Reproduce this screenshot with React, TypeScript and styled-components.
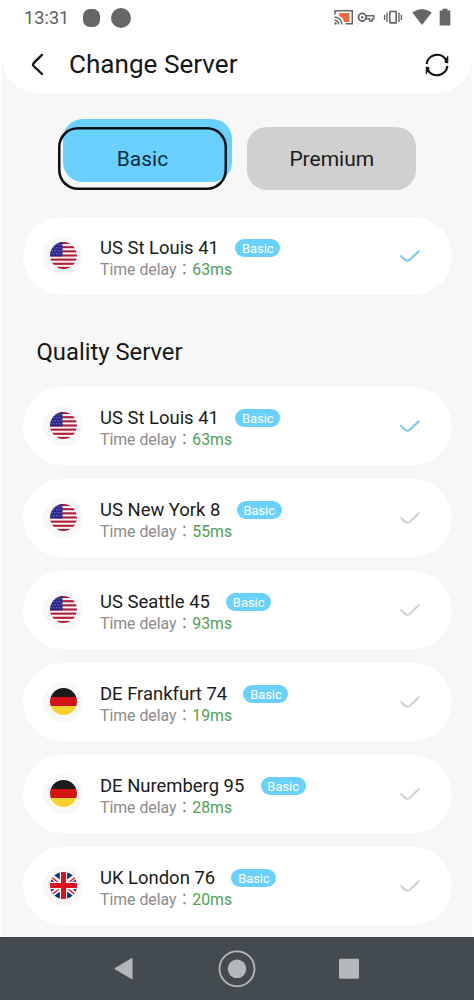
import React from "react";
import styled, { createGlobalStyle } from "styled-components";

const GlobalStyle = createGlobalStyle`
  * { box-sizing: border-box; }
  body { margin: 0; background: #fff; font-family: Roboto, "Noto Sans CJK TC", sans-serif; }
`;

const Screen = styled.div`
  width: 474px;
  height: 1000px;
  display: flex;
  flex-direction: column;
  overflow: hidden;
  background: #fff;
`;

const Body = styled.div`
  flex: 1;
  min-height: 0;
  margin: 0 2px;
  background: #f7f7f7;
  overflow: hidden;
`;

const Header = styled.header`
  height: 93px;
  background: #fff;
  border-radius: 0 0 36px 36px;
`;

const StatusBar = styled.div`
  height: 36px;
  padding: 0 22px;
  display: flex;
  align-items: center;
  justify-content: space-between;
`;

const StatusLeft = styled.div`
  display: flex;
  align-items: center;
  color: #606060;
`;

const Clock = styled.span`
  width: 58.5px;
  font-size: 18px;
  line-height: 36px;
  letter-spacing: 0.1px;
`;

const Dot = styled.span<{ $size: number; $radius: number }>`
  width: ${(p) => p.$size}px;
  height: ${(p) => p.$size}px;
  margin: 0 10.5px 0 0;
  border-radius: ${(p) => p.$radius}px;
  background: #666;
`;

const StatusIcons = styled.svg`
  width: 120px;
  height: 36px;
  margin-right: -3px;
`;

const TitleBar = styled.div`
  height: 57px;
  padding: 0 22px 0 28px;
  display: flex;
  align-items: center;
`;

const Title = styled.h1`
  flex: 1;
  margin: 0 0 0 21px;
  font-size: 26.1px;
  line-height: 57px;
  font-weight: 400;
  color: #171717;
`;

const Tabs = styled.div`
  display: flex;
  gap: 20.3px;
  margin-top: 34px;
  padding-left: 56px;
`;

const Tab = styled.button<{ $active?: boolean }>`
  position: relative;
  width: 169px;
  height: 63px;
  padding: 2px 0 0;
  border: 0;
  border-radius: 20px;
  background: ${(p) => (p.$active ? "transparent" : "#d0d0d0")};
  color: ${(p) => (p.$active ? "#0d2b3a" : "#1b1b1b")};
  font: 400 21px/1 Roboto, sans-serif;
  isolation: isolate;
`;

const TabFill = styled.span`
  position: absolute;
  z-index: -1;
  left: 5px;
  top: -8px;
  width: 169px;
  height: 63px;
  border-radius: 20px;
  background: #69d1ff;
`;

const TabOutline = styled.span`
  position: absolute;
  inset: 0;
  box-shadow: inset 0 0 0 2.5px #0b1014;
  border-radius: 20px;
`;

const Card = styled.div`
  display: flex;
  align-items: center;
  width: 429px;
  height: 78.5px;
  padding: 0 31px 0 20.5px;
  border-radius: 40px;
  background: #fff;
`;

const Current = styled.section`
  padding: 26.5px 0 0 20.5px;
`;

const SectionTitle = styled.h2`
  margin: 0;
  padding: 40px 0 16.5px 34.5px;
  font-size: 23.8px;
  line-height: 35px;
  font-weight: 400;
  color: #171717;
`;

const List = styled.section`
  display: flex;
  flex-direction: column;
  gap: 13.55px;
  padding-left: 20.5px;
`;

const FlagRing = styled.span`
  width: 40px;
  height: 40px;
  display: grid;
  place-items: center;
  border-radius: 50%;
  background: #f8f8f8;
`;

const Info = styled.div`
  flex: 1;
  padding: 6px 0 0 17px;
`;

const NameRow = styled.div`
  display: flex;
  align-items: center;
  height: 22px;
`;

const Name = styled.span`
  font-size: 18.45px;
  line-height: 22px;
  color: #1b1b1b;
  white-space: nowrap;
`;

const Badge = styled.span`
  width: 45px;
  height: 18.5px;
  margin: 0 0 0 16.3px;
  border-radius: 10px;
  background: #69d1ff;
  color: #fff;
  font-size: 12.9px;
  line-height: 19.5px;
  text-align: center;
`;

const Delay = styled.div`
  height: 22px;
  font-size: 15.8px;
  line-height: 22px;
  color: #8c8c8c;
  white-space: nowrap;
`;

const Millis = styled.span`
  color: #50a154;
`;

const NavBar = styled.nav`
  height: 63px;
  background: #434b51;
  display: flex;
  align-items: center;
  justify-content: center;
  gap: 74px;
`;

const Flag = ({ code, id }: { code: string; id: string }) => (
  <svg width="27" height="27" viewBox="0 0 27 27">
    <defs>
      <clipPath id={id}>
        <circle cx="13.5" cy="13.5" r="13.5" />
      </clipPath>
    </defs>
    <g clipPath={`url(#${id})`}>
      {code === "US" && (
        <>
          <rect width="27" height="27" fill="#f8f4f5" />
          {[0, 1, 2, 3, 4, 5, 6].map((i) => (
            <rect key={i} y={i * 4.15} width="27" height="2.08" fill="#b01c34" />
          ))}
          <rect width="12.5" height="14.4" fill="#28288c" />
          {[2, 5, 8, 11].map((y, r) =>
            [2, 5, 8, 11].map((x) => (
              <circle key={`${x}-${y}`} cx={x - (r % 2) * 1.2} cy={y + 0.8} r="0.55" fill="#b9bde8" />
            ))
          )}
        </>
      )}
      {code === "DE" && (
        <>
          <rect width="27" height="9" fill="#1b1b1b" />
          <rect y="9" width="27" height="9" fill="#d31414" />
          <rect y="18" width="27" height="9" fill="#f8d22c" />
        </>
      )}
      {code === "UK" && (
        <>
          <rect width="27" height="27" fill="#17286e" />
          <path d="M-4 0 31 27M31 0-4 27" stroke="#fff" strokeWidth="5" />
          <path d="M-4 1 13 14M31 1 14 14M-4 27 13 14M31 27 14 14" stroke="#d5152c" strokeWidth="1.4" />
          <path d="M13.5 0V27M0 13.5H27" stroke="#fff" strokeWidth="7.4" />
          <path d="M13.5 0V27M0 13.5H27" stroke="#e00f1c" strokeWidth="5" />
        </>
      )}
    </g>
  </svg>
);

const Check = ({ on }: { on?: boolean }) => (
  <svg width="22" height="16" viewBox="0 0 22 16" fill="none">
    <path
      d="M2 8.1 6.2 11.9Q8.5 13.7 10.8 11.7L19.8 3.2"
      stroke={on ? "#76c9ea" : "#d0d0d0"}
      strokeWidth="2"
      strokeLinecap="round"
    />
  </svg>
);

type Server = { code: string; name: string; delay: string; on?: boolean };

const servers: Server[] = [
  { code: "US", name: "US St Louis 41", delay: "63ms", on: true },
  { code: "US", name: "US New York 8", delay: "55ms" },
  { code: "US", name: "US Seattle 45", delay: "93ms" },
  { code: "DE", name: "DE Frankfurt 74", delay: "19ms" },
  { code: "DE", name: "DE Nuremberg 95", delay: "28ms" },
  { code: "UK", name: "UK London 76", delay: "20ms" },
];

const ServerCard = ({ server, id }: { server: Server; id: string }) => (
  <Card>
    <FlagRing>
      <Flag code={server.code} id={id} />
    </FlagRing>
    <Info>
      <NameRow>
        <Name>{server.name}</Name>
        <Badge>Basic</Badge>
      </NameRow>
      <Delay>
        Time delay：<Millis>{server.delay}</Millis>
      </Delay>
    </Info>
    <Check on={server.on} />
  </Card>
);

export default function App() {
  return (
    <>
      <GlobalStyle />
      <Screen>
        <Body>
          <Header>
            <StatusBar>
              <StatusLeft>
                <Clock>13:31</Clock>
                <Dot $size={17.5} $radius={7} />
                <Dot $size={20} $radius={10} />
              </StatusLeft>
              <StatusIcons viewBox="333 0 120 36" fill="none">
                <path d="M339 13h10.5v9H344Q343 17 339 16Z" fill="#f4683f" />
                <path d="M335 14.5V10.8H352.3V23.8H345.5" stroke="#666" strokeWidth="1.5" />
                <path d="M334.5 17A7.6 7.6 0 0 1 342 24.5M334.5 20.2A4.3 4.3 0 0 1 338.8 24.5" stroke="#666" strokeWidth="1.4" />
                <circle cx="335.6" cy="23.5" r="1.2" fill="#666" />
                <circle cx="362.3" cy="17.2" r="3.8" stroke="#666" strokeWidth="1.8" />
                <circle cx="362.3" cy="17.2" r="1.2" fill="#666" />
                <path d="M365.9 15.7H373.8V18.7H372.4V21H369.6V18.7H365.9" stroke="#666" strokeWidth="1.5" />
                <rect x="389.8" y="11.5" width="6.4" height="11.4" rx="0.5" stroke="#666" strokeWidth="1.6" />
                <path d="M387 12.5V22M399 12.5V22M384.6 14.7V20M401.4 14.7V20" stroke="#666" strokeWidth="1.4" />
                <path d="M412.3 12.6Q422 5.6 431.7 12.6L422 25Z" fill="#666" />
                <path d="M442.5 8.8h5v1.7h2.8V25.6H439.7V10.5h2.8Z" fill="#666" />
              </StatusIcons>
            </StatusBar>
            <TitleBar>
              <svg width="18" height="26" viewBox="0 0 18 26" fill="none">
                <path d="M12 2.9 3.6 11.1Q2.4 12.6 3.6 14L12 22" stroke="#111" strokeWidth="2.3" strokeLinecap="round" />
              </svg>
              <Title>Change Server</Title>
              <svg width="26" height="26" viewBox="0 0 26 26" fill="none" stroke="#111" strokeWidth="2.2">
                <path d="M2.6 12A10.5 10.5 0 0 1 22.6 9M23.4 14A10.5 10.5 0 0 1 3.4 17" />
                <path d="M23.8 4.2V11L20.8 10.2ZM2.2 21.8V15L5.2 15.8Z" fill="#111" strokeWidth="0.9" />
              </svg>
            </TitleBar>
          </Header>
          <Tabs>
            <Tab $active>
              <TabFill />
              <TabOutline />
              Basic
            </Tab>
            <Tab>Premium</Tab>
          </Tabs>
          <Current>
            <ServerCard server={servers[0]} id="flag-current" />
          </Current>
          <SectionTitle>Quality Server</SectionTitle>
          <List>
            {servers.map((s, i) => (
              <ServerCard key={s.name} server={s} id={`flag-${i}`} />
            ))}
          </List>
        </Body>
        <NavBar>
          <svg width="38" height="38" viewBox="0 0 38 38">
            <path d="M9.3 18.7 25.8 9V28.4Z" fill="#b3b8ba" stroke="#b3b8ba" strokeWidth="1.5" strokeLinejoin="round" />
          </svg>
          <svg width="38" height="38" viewBox="0 0 38 38">
            <circle cx="19" cy="18.8" r="17.5" fill="none" stroke="#b3b8ba" strokeWidth="1.8" />
            <circle cx="19" cy="18.8" r="9.3" fill="#b3b8ba" />
          </svg>
          <svg width="38" height="38" viewBox="0 0 38 38">
            <rect x="9" y="8.7" width="20" height="20" rx="1.2" fill="#b3b8ba" />
          </svg>
        </NavBar>
      </Screen>
    </>
  );
}
